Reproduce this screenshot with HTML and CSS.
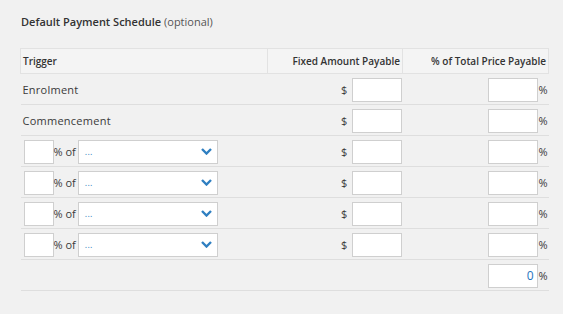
FILE: index.html
```html
<!DOCTYPE html>
<html lang="en">
<head>
    <meta charset="UTF-8">
    <title>Default Payment Schedule</title>
    <link rel="stylesheet" href="styles.css">
</head>
<body>
    <div class="schedule">
        <h3 class="title">Default Payment Schedule <span class="optional">(optional)</span></h3>
        <table class="pay-table">
            <thead>
                <tr>
                    <th class="col-trigger">Trigger</th>
                    <th class="col-fixed">Fixed Amount Payable</th>
                    <th class="col-pct">% of Total Price Payable</th>
                </tr>
            </thead>
            <tbody>
                <tr>
                    <td>Enrolment</td>
                    <td class="num"><span class="unit">$</span><input type="text" class="box"></td>
                    <td class="num"><input type="text" class="box"><span class="pct">%</span></td>
                </tr>
                <tr>
                    <td>Commencement</td>
                    <td class="num"><span class="unit">$</span><input type="text" class="box"></td>
                    <td class="num"><input type="text" class="box"><span class="pct">%</span></td>
                </tr>
                <tr>
                    <td><div class="trig"><input type="text" class="box small"><span class="of">% of</span><div class="select"><span>...</span><svg width="11" height="7" viewBox="0 0 11 7"><path d="M1 1l4.5 4.5L10 1" fill="none" stroke="#2f7fc1" stroke-width="2.4"/></svg></div></div></td>
                    <td class="num"><span class="unit">$</span><input type="text" class="box"></td>
                    <td class="num"><input type="text" class="box"><span class="pct">%</span></td>
                </tr>
                <tr>
                    <td><div class="trig"><input type="text" class="box small"><span class="of">% of</span><div class="select"><span>...</span><svg width="11" height="7" viewBox="0 0 11 7"><path d="M1 1l4.5 4.5L10 1" fill="none" stroke="#2f7fc1" stroke-width="2.4"/></svg></div></div></td>
                    <td class="num"><span class="unit">$</span><input type="text" class="box"></td>
                    <td class="num"><input type="text" class="box"><span class="pct">%</span></td>
                </tr>
                <tr>
                    <td><div class="trig"><input type="text" class="box small"><span class="of">% of</span><div class="select"><span>...</span><svg width="11" height="7" viewBox="0 0 11 7"><path d="M1 1l4.5 4.5L10 1" fill="none" stroke="#2f7fc1" stroke-width="2.4"/></svg></div></div></td>
                    <td class="num"><span class="unit">$</span><input type="text" class="box"></td>
                    <td class="num"><input type="text" class="box"><span class="pct">%</span></td>
                </tr>
                <tr>
                    <td><div class="trig"><input type="text" class="box small"><span class="of">% of</span><div class="select"><span>...</span><svg width="11" height="7" viewBox="0 0 11 7"><path d="M1 1l4.5 4.5L10 1" fill="none" stroke="#2f7fc1" stroke-width="2.4"/></svg></div></div></td>
                    <td class="num"><span class="unit">$</span><input type="text" class="box"></td>
                    <td class="num"><input type="text" class="box"><span class="pct">%</span></td>
                </tr>
                <tr>
                    <td></td>
                    <td></td>
                    <td class="num"><input type="text" class="box total" value="0"><span class="pct">%</span></td>
                </tr>
            </tbody>
        </table>
    </div>
</body>
</html>
```

FILE: styles.css
```css
body {
    margin: 0;
    background: #f1f1f1;
    font-family: 'Open Sans', sans-serif;
    font-size: 11px;
    color: #333;
}
.schedule {
    padding: 14px 14px 0 20px;
}
.title {
    margin: 0 0 18px 1px;
    font-size: 11px;
    font-weight: 600;
    color: #333;
    line-height: 16px;
}
.optional {
    font-weight: normal;
    color: #555;
}
.pay-table {
    border-collapse: collapse;
    width: 529px;
}
.pay-table th {
    background: #f4f4f4;
    border: 1px solid #e2e2e2;
    height: 24px;
    padding: 0 2px;
    font-size: 10px;
    font-weight: 600;
    color: #333;
    text-align: left;
}
.pay-table th.col-trigger {
    width: 242px;
}
.pay-table th.col-fixed {
    width: 130px;
    text-align: right;
}
.pay-table th.col-pct {
    text-align: right;
}
.pay-table td {
    height: 30px;
    padding: 0 1px 0 2px;
    border-bottom: 1px solid #dedede;
    vertical-align: middle;
    white-space: nowrap;
    letter-spacing: 0.25px;
    color: #3a3a3a;
}
.pay-table td.num {
    text-align: right;
    padding-right: 1px;
}
.box {
    box-sizing: border-box;
    width: 50px;
    height: 24px;
    margin: 1px 0 0;
    border: 1px solid #cfcfcf;
    background: #fff;
    vertical-align: middle;
    font-family: 'Open Sans', sans-serif;
    font-size: 11px;
    padding: 0 4px;
}
.box.small {
    width: 30px;
    margin: 0;
}
.pay-table .box.total {
    text-align: right;
    color: #1e73be;
    -webkit-text-fill-color: #1e73be;
    font-size: 12px;
    padding-right: 3px;
}
.unit {
    display: inline-block;
    margin-right: 4px;
    vertical-align: middle;
}
.pct {
    display: inline-block;
    width: 9px;
    text-align: left;
    margin-left: 1px;
    letter-spacing: 0;
    vertical-align: middle;
}
.trig {
    display: flex;
    align-items: center;
    margin: 1px 0 0 1px;
}
.of {
    margin: 0 2px 0 0;
    letter-spacing: 0;
}
.select {
    box-sizing: border-box;
    width: 140px;
    height: 24px;
    border: 1px solid #cfcfcf;
    background: #fff;
    display: flex;
    align-items: center;
    justify-content: space-between;
    padding: 0 5px 0 6px;
    color: #2f7fc1;
    font-size: 9px;
}
```
